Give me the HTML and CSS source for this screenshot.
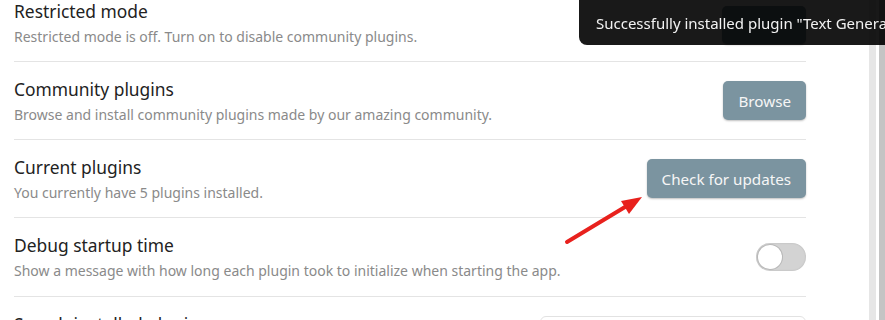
FILE: index.html
```html
<!DOCTYPE html>
<html lang="en">
<head>
    <meta charset="UTF-8">
    <title>Community plugins</title>
    <link rel="stylesheet" href="styles.css">
</head>
<body>
    <div class="window">
        <div class="settings">
            <div class="setting-item">
                <div class="info">
                    <div class="name">Restricted mode</div>
                    <div class="desc">Restricted mode is off. Turn on to disable community plugins.</div>
                </div>
                <!-- hidden behind the notice in the screenshot -->
                <button class="btn btn-turn-on" aria-label="Turn on"></button>
            </div>

            <div class="setting-item">
                <div class="info">
                    <div class="name">Community plugins</div>
                    <div class="desc">Browse and install community plugins made by our amazing community.</div>
                </div>
                <button class="btn">Browse</button>
            </div>

            <div class="setting-item">
                <div class="info">
                    <div class="name">Current plugins</div>
                    <div class="desc">You currently have 5 plugins installed.</div>
                </div>
                <button class="btn">Check for updates</button>
            </div>

            <div class="setting-item">
                <div class="info">
                    <div class="name">Debug startup time</div>
                    <div class="desc">Show a message with how long each plugin took to initialize when starting the app.</div>
                </div>
                <div class="toggle"></div>
            </div>

            <div class="setting-item">
                <div class="info info-single">
                    <div class="name">Search installed plugins</div>
                </div>
                <input class="search" type="text">
            </div>
        </div>

        <div class="scroll-track"></div>
        <div class="scroll-thumb"></div>
    </div>

    <div class="notice">Successfully installed plugin "Text Generator"</div>

    <!-- annotation arrow pointing at the update button -->
    <svg class="arrow" width="885" height="320" viewBox="0 0 885 320">
        <line x1="567" y1="242" x2="630" y2="204" stroke="#e8211d" stroke-width="4" stroke-linecap="round"/>
        <polygon points="642,197 621,201 629,214" fill="#e8211d"/>
    </svg>
</body>
</html>
```

FILE: styles.css
```css
body {
    margin: 0;
    overflow: hidden;
    background-color: white;
    font-family: "Noto Sans", "Open Sans", sans-serif;
}
.window {
    display: flex;
    height: 320px;
    overflow: hidden;
}
.settings {
    width: 792px;
    margin-left: 14px;
    margin-top: -17px;
    flex: none;
}
.setting-item {
    box-sizing: border-box;
    height: 78px;
    display: flex;
    align-items: center;
    justify-content: space-between;
    border-top: 1px solid #e4e4e4;
}
.setting-item:nth-child(4) {
    height: 79px;
}
.info-single {
    margin-bottom: 24px;
}
.name {
    font-size: 17.4px;
    line-height: 24px;
    color: #222;
}
.desc {
    font-size: 14px;
    line-height: 20px;
    margin-top: 4px;
    color: #8a8a8a;
}
.btn {
    height: 39px;
    padding: 0 15px;
    font-family: inherit;
    font-size: 15.2px;
    color: #f6f6f6;
    background-color: #7b94a0;
    border: none;
    border-radius: 5px;
    box-shadow: 0 1px 2px rgba(0,0,0,0.25);
}
.btn-turn-on {
    width: 84px;
    height: 38px;
    margin-top: 4px;
}
.toggle {
    position: relative;
    width: 50px;
    height: 28px;
    border-radius: 14px;
    background-color: #d3d3d3;
    box-shadow: inset 0 0 2px rgba(0,0,0,0.15);
}
.toggle::before {
    content: "";
    position: absolute;
    left: 2px;
    top: 2px;
    width: 24px;
    height: 24px;
    border-radius: 50%;
    background-color: white;
    box-shadow: 0 0 0 1px #b8b8b8;
}
.search {
    box-sizing: border-box;
    width: 266px;
    height: 40px;
    border: 1px solid #e2e2e2;
    border-radius: 6px;
}
.scroll-track {
    width: 7px;
    margin-left: auto;
    background-color: #e6e6e6;
}
.scroll-thumb {
    width: 6px;
    margin-left: 3px;
    background-color: #c4c4c4;
}
.notice {
    position: fixed;
    top: -10px;
    left: 579px;
    height: 55px;
    box-sizing: border-box;
    padding: 21px 0 0 17px;
    font-size: 15px;
    line-height: 24px;
    color: #f2f2f2;
    white-space: nowrap;
    width: 400px;
    background-color: rgba(0,0,0,0.9);
    border-radius: 8px;
}
.arrow {
    position: absolute;
    top: 0;
    left: 0;
    pointer-events: none;
}
```
